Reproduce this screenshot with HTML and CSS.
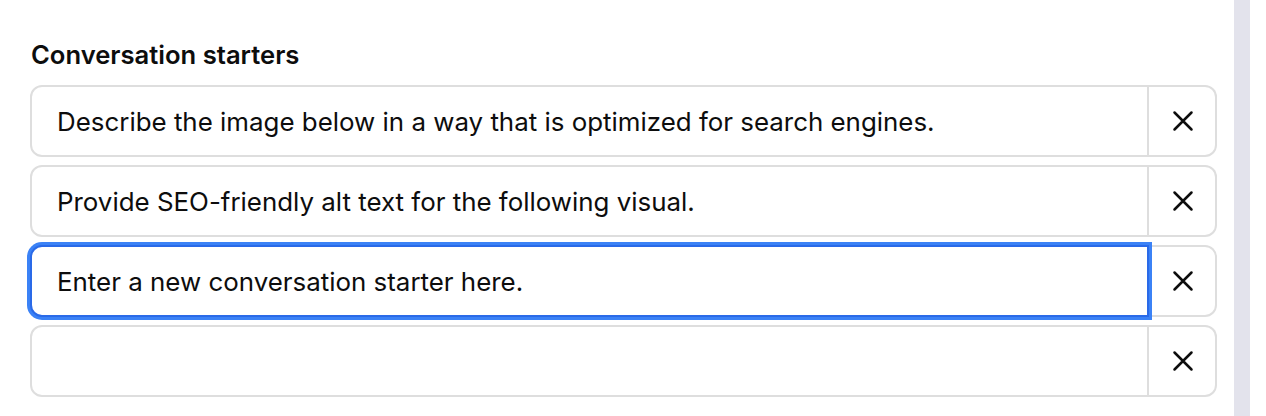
FILE: index.html
```html
<!DOCTYPE html>
<html>
<head>
<meta charset="utf-8">
<link rel="stylesheet" href="styles.css">
</head>
<body>
<div class="page">
  <main class="main">
    <h2 class="title">Conversation starters</h2>
    <div class="row">
      <div class="field">Describe the image below in a way that is optimized for search engines.</div>
      <button class="remove" aria-label="Remove"><svg viewBox="0 0 24 24" width="24" height="24"><path d="M3.5 3.5L20.5 20.5M20.5 3.5L3.5 20.5" stroke="#0d0d0d" stroke-width="2.5" stroke-linecap="round" fill="none"/></svg></button>
    </div>
    <div class="row">
      <div class="field">Provide SEO-friendly alt text for the following visual.</div>
      <button class="remove" aria-label="Remove"><svg viewBox="0 0 24 24" width="24" height="24"><path d="M3.5 3.5L20.5 20.5M20.5 3.5L3.5 20.5" stroke="#0d0d0d" stroke-width="2.5" stroke-linecap="round" fill="none"/></svg></button>
    </div>
    <div class="row">
      <div class="field focused">Enter a new conversation starter here.</div>
      <button class="remove" aria-label="Remove"><svg viewBox="0 0 24 24" width="24" height="24"><path d="M3.5 3.5L20.5 20.5M20.5 3.5L3.5 20.5" stroke="#0d0d0d" stroke-width="2.5" stroke-linecap="round" fill="none"/></svg></button>
    </div>
    <div class="row">
      <div class="field"></div>
      <button class="remove" aria-label="Remove"><svg viewBox="0 0 24 24" width="24" height="24"><path d="M3.5 3.5L20.5 20.5M20.5 3.5L3.5 20.5" stroke="#0d0d0d" stroke-width="2.5" stroke-linecap="round" fill="none"/></svg></button>
    </div>
  </main>
  <div class="scrollbar"></div>
</div>
</body>
</html>
```
FILE: styles.css
```css
html, body {
  margin: 0;
  padding: 0;
  background: #ffffff;
}
body {
  font-family: Inter, "Noto Sans", "Liberation Sans", sans-serif;
  color: #0d0d0d;
}
.page {
  display: flex;
  height: 416px;
  padding-right: 16px;
  overflow: hidden;
}
.main {
  flex: 1;
  padding: 0 17px 0 30px;
}
.scrollbar {
  width: 16px;
  background: #e3e3ec;
}
.title {
  margin: 40px 0 15px 1px;
  font-size: 25.6px;
  line-height: 30px;
  font-weight: 600;
}
.row {
  display: flex;
  height: 72px;
  margin-bottom: 8px;
}
.field {
  flex: 1;
  display: flex;
  align-items: center;
  padding: 0 24px 0 25px;
  border: 2px solid #dedede;
  border-radius: 12px 0 0 12px;
  font-size: 25.9px;
  background: #fff;
  white-space: nowrap;
  overflow: hidden;
}
.field.focused {
  border-color: #2a6ae8;
  box-shadow: 0 0 0 3px #3b82f6;
  position: relative;
  z-index: 1;
}
.remove {
  width: 68px;
  flex: none;
  display: flex;
  align-items: center;
  justify-content: center;
  padding: 0 0 0 1px;
  border: 2px solid #dedede;
  border-left: none;
  border-radius: 0 12px 12px 0;
  background: #fff;
  cursor: pointer;
}
```
